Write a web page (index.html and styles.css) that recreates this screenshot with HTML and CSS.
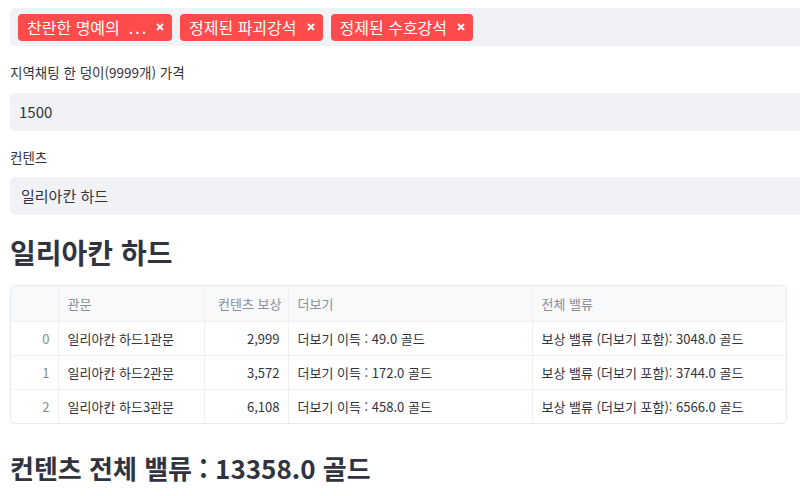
FILE: index.html
```html
<!DOCTYPE html>
<html lang="ko">
  <head>
    <meta charset="UTF-8" />
    <meta name="viewport" content="width=device-width, initial-scale=1.0" />
    <title>일리아칸 하드</title>
    <link rel="stylesheet" href="styles.css">
  </head>
  <body>
    <main class="page">
      <div class="multiselect">
        <span class="tag"><span class="tag-label tag-cut">찬란한 명예의<span class="dots">...</span></span><svg class="tag-x" viewBox="0 0 8 8"><path d="M1 1L7 7M7 1L1 7" /></svg></span>
        <span class="tag"><span class="tag-label">정제된 파괴강석</span><svg class="tag-x" viewBox="0 0 8 8"><path d="M1 1L7 7M7 1L1 7" /></svg></span>
        <span class="tag"><span class="tag-label">정제된 수호강석</span><svg class="tag-x" viewBox="0 0 8 8"><path d="M1 1L7 7M7 1L1 7" /></svg></span>
      </div>

      <label class="field-label">지역채팅 한 덩이(9999개) 가격</label>
      <div class="field field-number">1500</div>

      <label class="field-label">컨텐츠</label>
      <div class="field field-select">일리아칸 하드</div>

      <h2 class="title">일리아칸 하드</h2>

      <div class="grid">
        <table>
          <thead>
            <tr>
              <th class="col-idx"></th>
              <th class="col-gate">관문</th>
              <th class="col-reward num">컨텐츠 보상</th>
              <th class="col-more">더보기</th>
              <th class="col-total">전체 밸류</th>
            </tr>
          </thead>
          <tbody>
            <tr>
              <td class="idx">0</td>
              <td>일리아칸 하드1관문</td>
              <td class="num">2,999</td>
              <td>더보기 이득 : 49.0 골드</td>
              <td>보상 밸류 (더보기 포함): 3048.0 골드</td>
            </tr>
            <tr>
              <td class="idx">1</td>
              <td>일리아칸 하드2관문</td>
              <td class="num">3,572</td>
              <td>더보기 이득 : 172.0 골드</td>
              <td>보상 밸류 (더보기 포함): 3744.0 골드</td>
            </tr>
            <tr>
              <td class="idx">2</td>
              <td>일리아칸 하드3관문</td>
              <td class="num">6,108</td>
              <td>더보기 이득 : 458.0 골드</td>
              <td>보상 밸류 (더보기 포함): 6566.0 골드</td>
            </tr>
          </tbody>
        </table>
      </div>

      <h3 class="total">컨텐츠 전체 밸류 : 13358.0 골드</h3>
    </main>
  </body>
</html>
```

FILE: styles.css
```css
* {
  margin: 0;
  padding: 0;
  box-sizing: border-box;
}
html,
body {
  width: 100%;
  height: 100%;
  overflow: hidden;
  background: #fff;
  color: #31333f;
  font-family: "Noto Sans CJK KR", "Noto Sans", sans-serif;
}
.page {
  padding: 8px 0 0 10px;
}
.multiselect {
  display: flex;
  align-items: center;
  gap: 8px;
  width: 830px;
  height: 38px;
  padding: 0 8px;
  background: #f0f2f6;
  border-radius: 5px;
}
.tag {
  display: flex;
  align-items: center;
  height: 27px;
  padding: 0 8px 0 9px;
  background: #ff4b4b;
  color: #fff;
  border-radius: 4px;
  font-size: 16px;
  line-height: 27px;
}
.tag-label {
  white-space: nowrap;
}
.tag-cut {
  width: 119px;
}
.dots {
  margin-left: 9px;
  letter-spacing: 2px;
}
.tag-x {
  width: 8px;
  height: 8px;
  margin-left: 10px;
  stroke: #fff;
  stroke-width: 1.8;
  fill: none;
}
.field-label {
  display: block;
  margin: 16px 0 11px;
  font-size: 13.5px;
  line-height: 20px;
}
.field {
  width: 830px;
  height: 38px;
  background: #f0f2f6;
  border-radius: 5px;
  font-size: 15px;
  line-height: 38px;
}
.field-number {
  padding-left: 9px;
}
.field-select {
  margin-top: -1px;
  padding-left: 11px;
}
.title {
  margin: 19px 0 15px;
  font-size: 28px;
  line-height: 36px;
  font-weight: 700;
}
.grid {
  width: 777px;
  border: 1px solid #e6e9ef;
  border-radius: 5px;
  overflow: hidden;
}
table {
  width: 100%;
  border-collapse: collapse;
  table-layout: fixed;
  font-size: 13px;
}
th,
td {
  padding: 0 8px 0 9px;
  text-align: left;
  white-space: nowrap;
  border-right: 1px solid #eef0f4;
  border-bottom: 1px solid #eef0f4;
}
th:last-child,
td:last-child {
  border-right: none;
}
tbody tr:last-child td {
  border-bottom: none;
}
th {
  height: 35px;
  background: #f8f9fb;
  color: #8b8d98;
  font-weight: 400;
}
td {
  height: 34px;
}
.col-idx {
  width: 47px;
}
.col-gate {
  width: 146px;
}
.col-reward {
  width: 84px;
}
.col-more {
  width: 244px;
}
.num {
  text-align: right;
}
th.num {
  padding-right: 6px;
}
.idx {
  text-align: right;
  color: #8b8d98;
}
.total {
  margin-top: 26px;
  font-size: 26px;
  line-height: 36px;
  font-weight: 700;
}
```
